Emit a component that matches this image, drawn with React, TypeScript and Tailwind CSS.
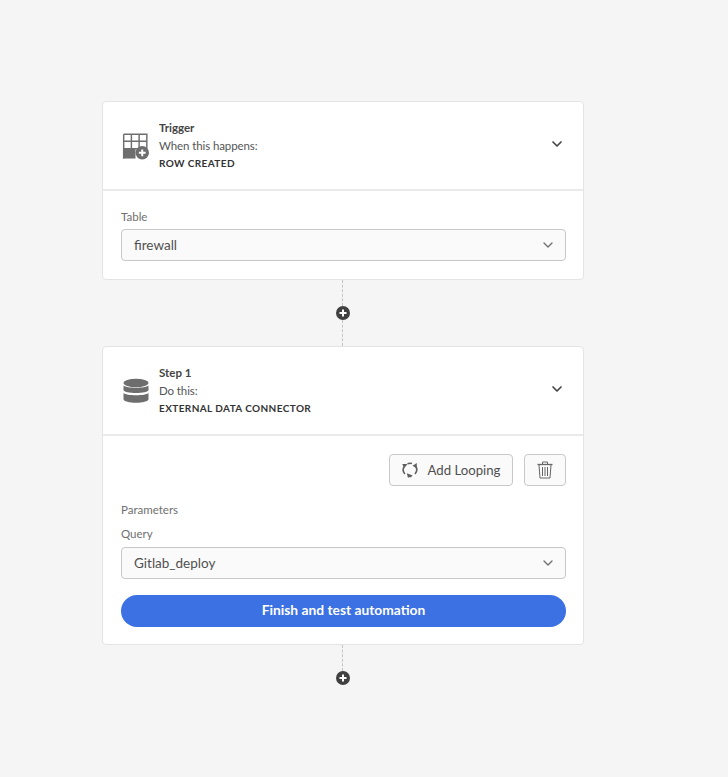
import { ChevronDown } from "lucide-react";

const font = "font-['Lato','Noto_Sans',sans-serif]";

function TableIcon() {
  return (
    <svg width="28" height="28" viewBox="0 0 28 28" fill="none">
      <path d="M1 17h13v10H1z" fill="#6e6e6e" />
      <path d="M1.750 1.750h24v15M1.750 1.750V27M1.750 9h24M1.750 16.750h15M9.750 1.750v15M17.750 1.750v15" stroke="#6e6e6e" strokeWidth="1.500" />
      <circle cx="21" cy="21" r="7" fill="#6e6e6e" />
      <path d="M21 17.500v7M17.500 21h7" stroke="#fff" strokeWidth="2" />
    </svg>
  );
}

function DataIcon() {
  return (
    <svg width="26" height="26" viewBox="0 0 26 26">
      <ellipse cx="13" cy="5" rx="12.500" ry="4.200" fill="#6e6e6e" />
      <path d="M.5 7.500C3 10.500 23 10.500 25.500 7.500V12C25.500 16 .5 16 .5 12z" fill="#6e6e6e" />
      <path d="M.5 15C3 18 23 18 25.500 15V21C25.500 26 .5 26 .5 21z" fill="#6e6e6e" />
    </svg>
  );
}

function PlusDot() {
  return (
    <svg width="14" height="14" viewBox="0 0 14 14" className="shrink-0">
      <circle cx="7" cy="7" r="7" fill="#404040" />
      <path d="M7 3.500v7M3.500 7h7" stroke="#fff" strokeWidth="2" />
    </svg>
  );
}

function LoopIcon() {
  return (
    <svg width="16" height="16" viewBox="0 0 16 16" fill="none" stroke="#606060" strokeWidth="1.600">
      <path d="M5.500 1.800A6.500 6.500 0 0 1 10 1.600" />
      <path d="M13.500 4A6.500 6.500 0 0 1 13 12" />
      <path d="M9.500 14.300a6.500 6.500 0 0 1-3.500-.2" />
      <path d="M2.800 12A6.500 6.500 0 0 1 1.800 5" />
      <path d="M.3 2h5.200L2 6.600zM14.800 1v5.500L10.500 3.800zM4.800 11.200l6 2.300-4.800 2.300z" fill="#606060" stroke="none" />
    </svg>
  );
}

function TrashIcon() {
  return (
    <svg width="16" height="18" viewBox="0 0 16 18" fill="none" stroke="#666" strokeWidth="1">
      <path d="M.5 3.500h15" strokeWidth="1.300" />
      <path d="M5.500 3V1h5v2" />
      <path d="M2 4l1 13h10l1-13" />
      <path d="M5.500 6v9M8 6v9M10.500 6v9" />
    </svg>
  );
}

function Select({ value }: { value: string }) {
  return (
    <div className="h-8 px-3 bg-[#fafafa] border border-[#c8c8c8] rounded flex items-center justify-between">
      <span className="text-[13.500px] text-[#505050]">{value}</span>
      <ChevronDown size={16} strokeWidth={2} className="text-[#707070] -mr-[3px]" />
    </div>
  );
}

function Header({ icon, title, sub, name }: { icon: React.ReactNode; title: string; sub: string; name: string }) {
  return (
    <div className="h-[89px] pl-[19px] pr-[18px] flex items-center justify-between border-b-2 border-[#eaeaea]">
      <div className="flex items-center gap-[10px]">
        <div className="w-[27px] flex justify-center">{icon}</div>
        <div className="flex flex-col gap-[1px]">
          <div className="text-[11.500px] leading-[17px] font-bold text-[#444]">{title}</div>
          <div className="text-[11.500px] leading-[17px] tracking-[-0.1px] text-[#555]">{sub}</div>
          <div className="text-[10px] leading-[17px] font-bold tracking-[0.4px] text-[#333]">{name}</div>
        </div>
      </div>
      <ChevronDown size={16} strokeWidth={2.500} className="text-[#444] mb-1" />
    </div>
  );
}

function Connector({ last }: { last?: boolean }) {
  return (
    <div className="flex flex-col items-center h-[66px]">
      <div className="h-[26px] mr-px border-l border-dashed border-[#c4c4c4]" />
      <PlusDot />
      {!last && <div className="flex-1 mr-px border-l border-dashed border-[#c4c4c4]" />}
    </div>
  );
}

export default function App() {
  return (
    <div className={`${font} min-h-screen bg-[#f5f5f5] pt-[101px] pl-[102px]`}>
      <div className="w-[482px]">
        <div className="bg-white border border-[#e4e4e4] rounded">
          <Header icon={<TableIcon />} title="Trigger" sub="When this happens:" name="ROW CREATED" />
          <div className="pl-[18px] pr-[17px] pt-[18px] pb-[18px]">
            <div className="text-[11.500px] leading-[16px] text-[#707070] mb-[4px]">Table</div>
            <Select value="firewall" />
          </div>
        </div>
        <Connector />
        <div className="bg-white border border-[#e4e4e4] rounded">
          <Header icon={<DataIcon />} title="Step 1" sub="Do this:" name="EXTERNAL DATA CONNECTOR" />
          <div className="pl-[18px] pr-[17px] pt-[18px] pb-[17px]">
            <div className="flex justify-end gap-[11px]">
              <div className="h-8 w-[124px] border border-[#c8c8c8] rounded bg-[#fafafa] flex items-center justify-center gap-[10px]">
                <LoopIcon />
                <span className="text-[13.200px] text-[#505050] mt-0.5">Add Looping</span>
              </div>
              <div className="h-8 w-[42px] border border-[#c8c8c8] rounded bg-[#fafafa] flex items-center justify-center">
                <TrashIcon />
              </div>
            </div>
            <div className="mt-[16px] text-[11.500px] leading-[16px] text-[#707070]">Parameters</div>
            <div className="mt-[8px] text-[11.500px] leading-[16px] text-[#707070] mb-[5px]">Query</div>
            <Select value="Gitlab_deploy" />
            <div className="mt-4 h-8 rounded-full bg-[#3b71e3] flex items-center justify-center text-[13.800px] font-bold text-white pb-0.5">
              Finish and test automation
            </div>
          </div>
        </div>
        <Connector last />
      </div>
    </div>
  );
}
